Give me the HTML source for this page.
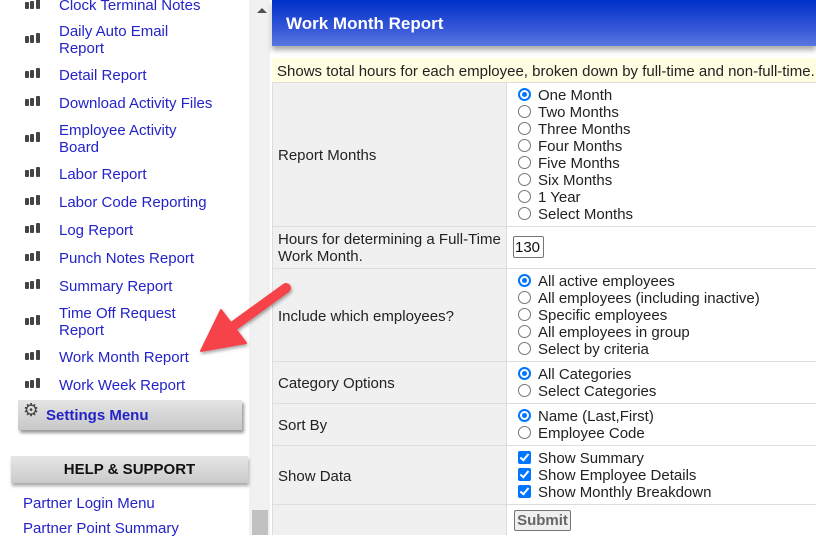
<!DOCTYPE html><html><head><style>
*{margin:0;padding:0;box-sizing:border-box}
body{width:816px;height:535px;overflow:hidden;background:#fff;font-family:"Liberation Sans",Arial,sans-serif;font-size:15px;position:relative}
.a{position:absolute;white-space:nowrap}
.nav{color:#2323c8;line-height:17px}
.ic{position:absolute;left:25px;width:16px;height:10px}
.ic i{position:absolute;bottom:0;width:4px;background:#444;border-radius:1px}
.lab{color:#222}
.r{position:absolute;left:518px;width:13px;height:13px;border:1px solid #767676;border-radius:50%;background:#fff}
.r.on{border:2px solid #0075ff}
.r.on:after{content:"";position:absolute;left:2px;top:2px;width:5px;height:5px;border-radius:50%;background:#0075ff}
.c{position:absolute;left:518px;width:13px;height:13px;border-radius:2px;background:#0075ff}
.c:after{content:"";position:absolute;left:4px;top:1px;width:3px;height:7px;border:solid #fff;border-width:0 2px 2px 0;transform:rotate(40deg)}
.t{position:absolute;left:538px;color:#222;line-height:17px}
.hl{position:absolute;left:272px;width:544px;height:1px;background:#ddd}
</style></head><body>
<div class="a" style="left:249px;top:0;width:21px;height:535px;background:#f1f1f1"></div>
<div class="a" style="left:257px;top:8px;width:0;height:0;border-left:5px solid transparent;border-right:5px solid transparent;border-bottom:5px solid #505050"></div>
<div class="a" style="left:252px;top:510px;width:16px;height:25px;background:#c1c1c1"></div>

<div class="nav">
<div class="ic" style="top:-1px"><i style="left:0;height:7px"></i><i style="left:5px;height:8px"></i><i style="left:11px;height:10px"></i></div>
<div class="a" style="left:59px;top:-3px">Clock Terminal Notes</div>
<div class="ic" style="top:33px"><i style="left:0;height:7px"></i><i style="left:5px;height:8px"></i><i style="left:11px;height:10px"></i></div>
<div class="a" style="left:59px;top:23px">Daily Auto Email<br>Report</div>
<div class="ic" style="top:68px"><i style="left:0;height:7px"></i><i style="left:5px;height:8px"></i><i style="left:11px;height:10px"></i></div>
<div class="a" style="left:59px;top:67px">Detail Report</div>
<div class="ic" style="top:96px"><i style="left:0;height:7px"></i><i style="left:5px;height:8px"></i><i style="left:11px;height:10px"></i></div>
<div class="a" style="left:59px;top:95px">Download Activity Files</div>
<div class="ic" style="top:132px"><i style="left:0;height:7px"></i><i style="left:5px;height:8px"></i><i style="left:11px;height:10px"></i></div>
<div class="a" style="left:59px;top:122px">Employee Activity<br>Board</div>
<div class="ic" style="top:167px"><i style="left:0;height:7px"></i><i style="left:5px;height:8px"></i><i style="left:11px;height:10px"></i></div>
<div class="a" style="left:59px;top:166px">Labor Report</div>
<div class="ic" style="top:195px"><i style="left:0;height:7px"></i><i style="left:5px;height:8px"></i><i style="left:11px;height:10px"></i></div>
<div class="a" style="left:59px;top:194px">Labor Code Reporting</div>
<div class="ic" style="top:223px"><i style="left:0;height:7px"></i><i style="left:5px;height:8px"></i><i style="left:11px;height:10px"></i></div>
<div class="a" style="left:59px;top:222px">Log Report</div>
<div class="ic" style="top:251px"><i style="left:0;height:7px"></i><i style="left:5px;height:8px"></i><i style="left:11px;height:10px"></i></div>
<div class="a" style="left:59px;top:250px">Punch Notes Report</div>
<div class="ic" style="top:279px"><i style="left:0;height:7px"></i><i style="left:5px;height:8px"></i><i style="left:11px;height:10px"></i></div>
<div class="a" style="left:59px;top:278px">Summary Report</div>
<div class="ic" style="top:315px"><i style="left:0;height:7px"></i><i style="left:5px;height:8px"></i><i style="left:11px;height:10px"></i></div>
<div class="a" style="left:59px;top:305px">Time Off Request<br>Report</div>
<div class="ic" style="top:350px"><i style="left:0;height:7px"></i><i style="left:5px;height:8px"></i><i style="left:11px;height:10px"></i></div>
<div class="a" style="left:59px;top:349px">Work Month Report</div>
<div class="ic" style="top:378px"><i style="left:0;height:7px"></i><i style="left:5px;height:8px"></i><i style="left:11px;height:10px"></i></div>
<div class="a" style="left:59px;top:377px">Work Week Report</div>
</div>

<div class="a" style="left:18px;top:400px;width:224px;height:30px;background:linear-gradient(#e4e4e4,#c8c8c8);box-shadow:2px 3px 3px #999"></div>
<div class="a" style="left:23px;top:400px;font-size:18px;color:#444">⚙</div>
<div class="a" style="left:46px;top:407px;font-weight:bold;color:#2323c8">Settings Menu</div>

<div class="a" style="left:11px;top:456px;width:237px;height:27px;background:linear-gradient(#e6e6e6,#cacaca);box-shadow:1px 3px 3px #aaa"></div>
<div class="a" style="left:11px;top:461px;width:237px;text-align:center;font-weight:bold;color:#111">HELP &amp; SUPPORT</div>
<div class="a nav" style="left:23px;top:495px">Partner Login Menu</div>
<div class="a nav" style="left:23px;top:520px">Partner Point Summary</div>

<div class="a" style="left:272px;top:0;width:544px;height:46px;background:linear-gradient(#0030c8,#3355d8 60%,#5a78e0);box-shadow:0 4px 5px #aaa"></div>
<div class="a" style="left:286px;top:14px;color:#fff;font-weight:bold;font-size:17px">Work Month Report</div>
<div class="a" style="left:272px;top:58px;width:544px;height:24px;background:#fffde2"></div>
<div class="a" style="left:277px;top:63px;color:#222">Shows total hours for each employee, broken down by full-time and non-full-time.</div>

<div class="a" style="left:272px;top:82px;width:235px;height:453px;background:#f0f0f0;border-left:1px solid #ddd;border-right:1px solid #ddd"></div>
<div class="hl" style="top:82px"></div><div class="hl" style="top:226px"></div><div class="hl" style="top:268px"></div><div class="hl" style="top:361px"></div><div class="hl" style="top:403px"></div><div class="hl" style="top:445px"></div><div class="hl" style="top:504px"></div>

<div class="a lab" style="left:278px;top:147px">Report Months</div>
<div class="a lab" style="left:278px;top:231px;line-height:17px">Hours for determining a Full-Time<br>Work Month.</div>
<div class="a lab" style="left:278px;top:308px">Include which employees?</div>
<div class="a lab" style="left:278px;top:375px">Category Options</div>
<div class="a lab" style="left:278px;top:417px">Sort By</div>
<div class="a lab" style="left:278px;top:468px">Show Data</div>

<div class="r on" style="top:88px"></div><div class="t" style="top:87px">One Month</div>
<div class="r" style="top:105px"></div><div class="t" style="top:104px">Two Months</div>
<div class="r" style="top:122px"></div><div class="t" style="top:121px">Three Months</div>
<div class="r" style="top:139px"></div><div class="t" style="top:138px">Four Months</div>
<div class="r" style="top:156px"></div><div class="t" style="top:155px">Five Months</div>
<div class="r" style="top:173px"></div><div class="t" style="top:172px">Six Months</div>
<div class="r" style="top:190px"></div><div class="t" style="top:189px">1 Year</div>
<div class="r" style="top:207px"></div><div class="t" style="top:206px">Select Months</div>

<div class="a" style="left:513px;top:236px;width:31px;height:22px;border:1px solid #767676;border-radius:2px;background:#fff;padding:2px 1px;color:#111">130</div>

<div class="r on" style="top:274px"></div><div class="t" style="top:273px">All active employees</div>
<div class="r" style="top:291px"></div><div class="t" style="top:290px">All employees (including inactive)</div>
<div class="r" style="top:308px"></div><div class="t" style="top:307px">Specific employees</div>
<div class="r" style="top:325px"></div><div class="t" style="top:324px">All employees in group</div>
<div class="r" style="top:342px"></div><div class="t" style="top:341px">Select by criteria</div>

<div class="r on" style="top:367px"></div><div class="t" style="top:366px">All Categories</div>
<div class="r" style="top:384px"></div><div class="t" style="top:383px">Select Categories</div>

<div class="r on" style="top:409px"></div><div class="t" style="top:408px">Name (Last,First)</div>
<div class="r" style="top:426px"></div><div class="t" style="top:425px">Employee Code</div>

<div class="c" style="top:451px"></div><div class="t" style="top:450px">Show Summary</div>
<div class="c" style="top:468px"></div><div class="t" style="top:467px">Show Employee Details</div>
<div class="c" style="top:485px"></div><div class="t" style="top:484px">Show Monthly Breakdown</div>

<div class="a" style="left:514px;top:510px;width:57px;height:21px;border:1px solid #767676;border-radius:2px;background:#efefef;color:#666;font-weight:bold;text-align:center;line-height:19px">Submit</div>

<svg class="a" style="left:0;top:0" width="816" height="535">
<defs><filter id="s"><feDropShadow dx="1" dy="2" stdDeviation="1.5" flood-color="#000" flood-opacity="0.35"/></filter></defs>
<g filter="url(#s)" fill="#f64348" stroke="#f64348">
<line x1="286" y1="288" x2="228" y2="330" stroke-width="10" stroke-linecap="round"/>
<polygon points="201,351 221,310 246,343" stroke-width="2" stroke-linejoin="round"/>
</g>
</svg>
</body></html>
